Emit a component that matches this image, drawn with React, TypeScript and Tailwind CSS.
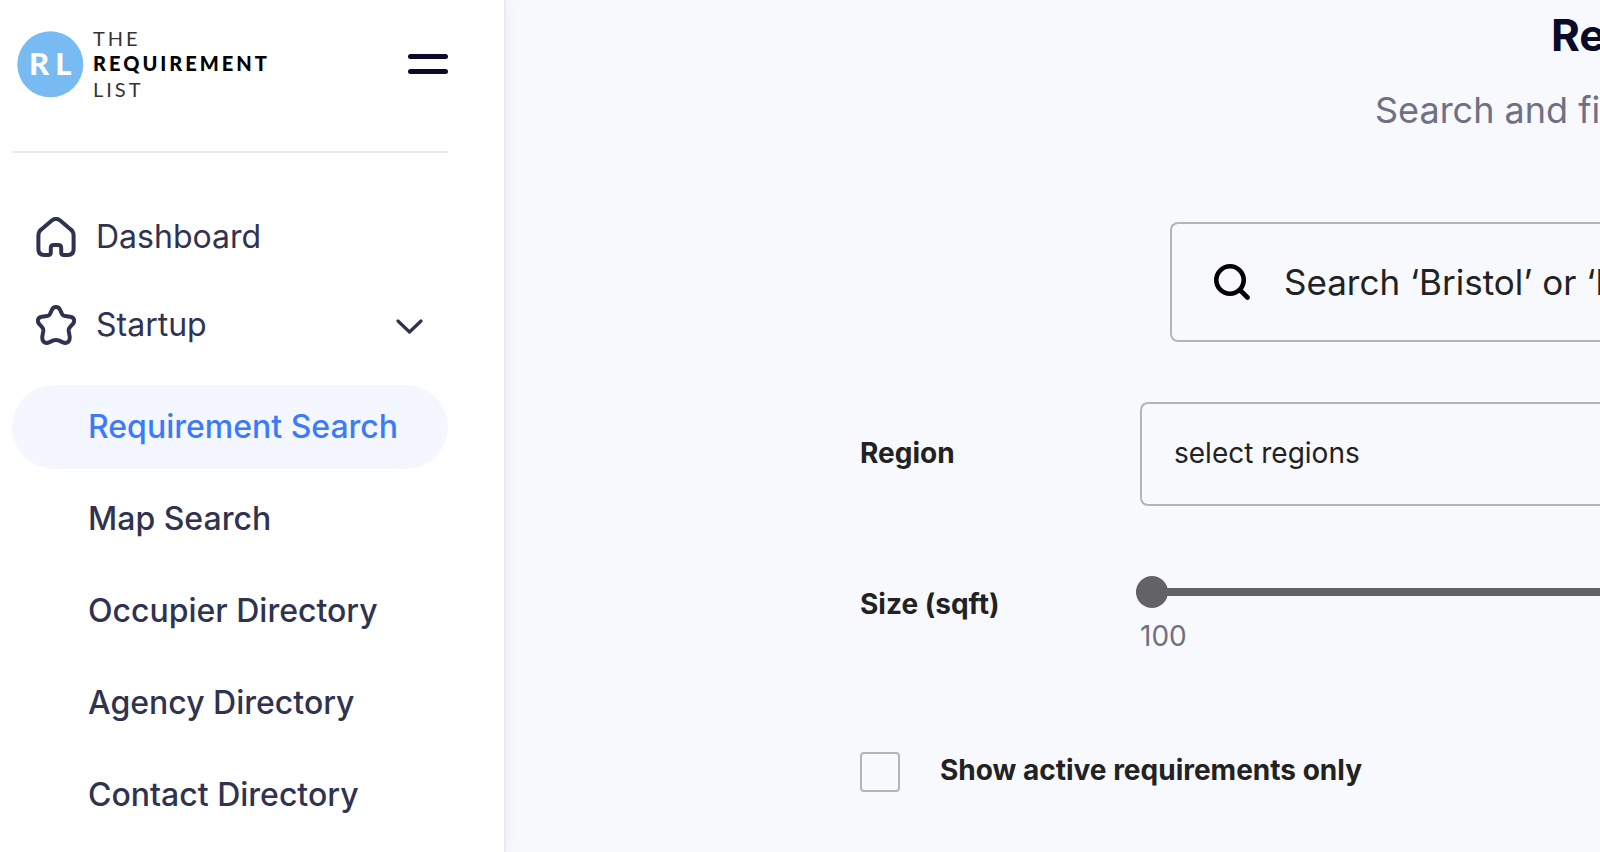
import { useState } from "react";

const startupLinks = [
  "Requirement Search",
  "Map Search",
  "Occupier Directory",
  "Agency Directory",
  "Contact Directory",
];

function Logo() {
  return (
    <svg width="264" height="80" viewBox="0 0 264 80" role="img" aria-label="The Requirement List">
      <circle cx="38.3" cy="40.3" r="33" fill="#78bbf3" />
      <g fontFamily="Lato, sans-serif">
        <text x="17" y="51" fontSize="31" fontWeight="900" letterSpacing="6" fill="#fff">
          RL
        </text>
        <g fontSize="20" fill="#000">
          <text x="81" y="22" fontWeight="400" letterSpacing="3" fill="#333">
            THE
          </text>
          <text x="81" y="47" fontWeight="900" letterSpacing="3">
            REQUIREMENT
          </text>
          <text x="81" y="73" fontWeight="400" letterSpacing="3" fill="#333">
            LIST
          </text>
        </g>
      </g>
    </svg>
  );
}

function HomeIcon() {
  return (
    <svg width="40" height="40" viewBox="0 0 40 40" fill="none" stroke="currentColor" strokeWidth="4" strokeLinejoin="round">
      <path d="M2.4 18.5C2.4 15.5 3.4 13.8 5.6 12.2L15.5 3.8Q20 0 24.5 3.8L34.4 12.2C36.6 13.8 37.6 15.5 37.6 18.5V32Q37.6 38 31.6 38H27.8Q25.2 38 25.2 35.4V31Q25.2 28 22.2 28H17.8Q14.8 28 14.8 31V35.4Q14.8 38 12.2 38H8.4Q2.4 38 2.4 32Z" />
    </svg>
  );
}

function StarIcon() {
  return (
    <svg width="40" height="40" viewBox="0 0 40 40" fill="none" stroke="currentColor" strokeWidth="4" strokeLinejoin="round">
      <path d="M15.7 5.2Q17 2 20 2Q23 2 24.3 5.2L26 9Q26.8 10.8 28.8 11L34 11.8Q37.5 12.3 38 14.8Q38.6 17.3 36.3 19.5L33.8 22.3Q32.4 23.8 32.7 26L33.6 31Q34.2 34.8 32.3 36.8Q30 38.8 27 37.4L22.5 35.4Q20 34.4 17.5 35.4L13 37.4Q10 38.8 7.7 36.8Q5.8 34.8 6.4 31L7.3 26Q7.6 23.8 6.2 22.3L3.7 19.5Q1.4 17.3 2 14.8Q2.5 12.3 6 11.8L11.2 11Q13.2 10.8 14 9Z" />
    </svg>
  );
}

function Sidebar() {
  const [open, setOpen] = useState(true);
  const [active, setActive] = useState("Requirement Search");

  return (
    <aside className="w-[506px] shrink-0 border-r-2 border-[#e9e9f1] bg-white pl-3 pr-14 shadow-[0_0_20px_rgba(0,0,0,0.05)]">
      <div className="flex items-center justify-between border-b-2 border-[#e9e9f1] pt-6 pb-[47px]">
        <a href="#">
          <Logo />
        </a>
        <button aria-label="Toggle menu" className="flex w-10 flex-col gap-2.5">
          <span className="h-[5px] w-full rounded-full bg-[#0b0b29]" />
          <span className="h-[5px] w-full rounded-full bg-[#0b0b29]" />
        </button>
      </div>

      <nav className="pt-10 text-[32px] leading-10 text-[#2f334f]">
        <a href="#" className="flex h-22 items-center gap-5 px-6">
          <HomeIcon />
          Dashboard
        </a>
        <button onClick={() => setOpen(!open)} className="flex h-22 w-full items-center gap-5 px-6">
          <StarIcon />
          Startup
          <svg className="ml-auto" width="28" height="18" viewBox="0 0 28 18" fill="none" stroke="currentColor" strokeWidth="3.2" strokeLinecap="round" strokeLinejoin="round">
            <path d="M2 5L13.5 16L25 5" />
          </svg>
        </button>
        {open && (
          <ul className="mt-4 space-y-2 font-medium">
            {startupLinks.map((link) => (
              <li key={link}>
                <a
                  href="#"
                  onClick={() => setActive(link)}
                  className={`flex h-21 items-center rounded-full pl-19 ${
                    link === active ? "bg-[#f4f7ff] text-[#3b7bfb]" : ""
                  }`}
                >
                  {link}
                </a>
              </li>
            ))}
          </ul>
        )}
      </nav>
    </aside>
  );
}

function SearchForm() {
  const [size, setSize] = useState(100);

  return (
    <form className="mt-21 pl-[354px] text-[28px] leading-10 text-[#222]">
      <label className="ml-[310px] flex h-30 items-center gap-[34px] rounded-l-lg border-2 border-r-0 border-[#b5b5b5] pl-[42px]">
        <svg className="shrink-0" width="36" height="36" viewBox="0 0 36 36" fill="none" stroke="#000" strokeWidth="4.6" strokeLinecap="round">
          <circle cx="16" cy="16" r="13.7" />
          <path d="M26 26L33.5 33.5" />
        </svg>
        <input
          type="text"
          aria-label="Search"
          placeholder="Search ‘Bristol’ or ‘L"
          className="w-full min-w-0 bg-transparent text-[35px] leading-14 outline-none placeholder:text-[#222]"
        />
      </label>

      <div className="mt-15 flex items-center">
        <label htmlFor="region" className="w-70 shrink-0 pb-0.5 font-bold">
          Region
        </label>
        <select
          id="region"
          className="h-26 w-full appearance-none rounded-l-lg border-2 border-r-0 border-[#b5b5b5] bg-transparent pb-0.5 pl-8"
        >
          <option>select regions</option>
        </select>
      </div>

      <div className="mt-[70px] flex items-start">
        <label htmlFor="size" className="w-70 shrink-0 pt-2 font-bold">
          Size (sqft)
        </label>
        <div className="grow">
          <div className="-ml-1 flex">
            <input
              id="size"
              type="range"
              min={100}
              max={100000}
              value={size}
              onChange={(e) => setSize(Number(e.target.value))}
              className="h-8 w-full appearance-none bg-transparent [&::-webkit-slider-runnable-track]:h-2 [&::-webkit-slider-runnable-track]:rounded-l-full [&::-webkit-slider-runnable-track]:bg-[#636267] [&::-webkit-slider-thumb]:-mt-3 [&::-webkit-slider-thumb]:size-8 [&::-webkit-slider-thumb]:appearance-none [&::-webkit-slider-thumb]:rounded-full [&::-webkit-slider-thumb]:bg-[#636267]"
            />
          </div>
          <p className="mt-2 text-[#6f7082]">{size}</p>
        </div>
      </div>

      <div className="mt-24 flex items-center gap-10">
        <input
          id="active-only"
          type="checkbox"
          className="size-10 appearance-none rounded border-2 border-[#b5b5b5] checked:bg-[#636267]"
        />
        <label htmlFor="active-only" className="pb-1 leading-9 font-bold">
          Show active requirements only
        </label>
      </div>
    </form>
  );
}

export default function App() {
  return (
    <div className="flex min-h-screen bg-[#f8f9fd] font-[Inter,sans-serif]">
      <Sidebar />
      <main className="min-w-0 grow overflow-hidden pt-2">
        <h1 className="pl-[1045px] text-[44px] leading-[54px] font-bold whitespace-nowrap text-[#0b0b29]">
          Re
        </h1>
        <p className="mt-5 pl-[869px] text-[36px] leading-14 whitespace-nowrap text-[#6f7082]">
          Search and fi
        </p>
        <SearchForm />
      </main>
    </div>
  );
}
